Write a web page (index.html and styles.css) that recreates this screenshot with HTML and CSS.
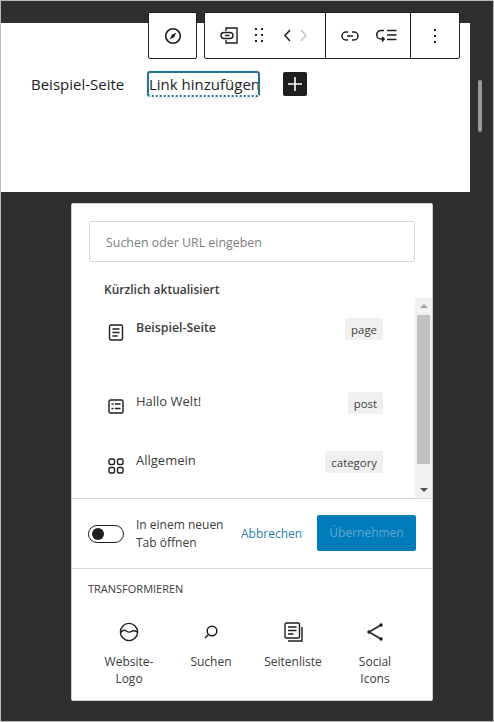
FILE: index.html
```html
<!DOCTYPE html>
<html lang="en">
<head>
    <meta charset="UTF-8">
    <meta name="viewport" content="width=device-width, initial-scale=1.0">
    <title>Navigation Link</title>
    <link rel="stylesheet" href="styles.css">
</head>
<body>
    <div class="frame">
        <div class="canvas-row">
            <div class="canvas">
                <span class="nav-item">Beispiel-Seite</span>
                <span class="nav-link">Link hinzufügen</span>
                <span class="add-btn">
                    <svg width="14" height="14" viewBox="0 0 14 14"><path d="M7 0v14M0 7h14" stroke="#fff" stroke-width="1.6" fill="none"/></svg>
                </span>
            </div>
            <div class="page-scroll"><div class="page-thumb"></div></div>

            <div class="toolbar">
                <div class="tool-group">
                    <span class="tool tool-compass">
                        <svg width="18" height="18" viewBox="0 0 18 18" fill="none" stroke="#1e1e1e" stroke-width="1.6"><circle cx="9" cy="9" r="7.3"/><path d="M12.2 5.8 10.2 10.2 5.8 12.2 7.8 7.8Z" fill="#1e1e1e" stroke="none"/></svg>
                    </span>
                </div>
                <div class="tool-group">
                    <div class="tool-section section-move">
                        <svg width="18" height="17" viewBox="0 0 18 17" fill="none" stroke="#1e1e1e" stroke-width="1.4"><path d="M6 4V1h11v15H6v-3"/><rect x="1" y="5.500" width="12" height="6" rx="3"/><path d="M5 8.500h4.500"/></svg>
                        <svg class="drag" width="9" height="15" viewBox="0 0 9 15" fill="#1e1e1e"><rect x="0" y="0" width="2" height="2"/><rect x="6" y="0" width="2" height="2"/><rect x="0" y="6" width="2" height="2"/><rect x="6" y="6" width="2" height="2"/><rect x="0" y="12" width="2" height="2"/><rect x="6" y="12" width="2" height="2"/></svg>
                        <span class="arrows">
                            <svg width="7" height="13" viewBox="0 0 7 13" fill="none" stroke="#1e1e1e" stroke-width="1.5"><path d="M6 1 1 6.500 6 12"/></svg>
                            <svg width="7" height="13" viewBox="0 0 7 13" fill="none" stroke="#c4c4c4" stroke-width="1.5"><path d="M1 1 6 6.500 1 12"/></svg>
                        </span>
                    </div>
                    <div class="tool-section section-link">
                        <svg width="18" height="10" viewBox="0 0 18 10" fill="none" stroke="#1e1e1e" stroke-width="1.5"><path d="M7 1H5a4 4 0 0 0 0 8h2M11 1h2a4 4 0 0 1 0 8h-2M6 5h6"/></svg>
                        <svg width="21" height="14" viewBox="0 0 21 14" fill="none" stroke="#1e1e1e" stroke-width="1.5"><path d="M8 1.500H5a4.200 4.200 0 0 0 0 8.600h3M6 8l2.200 2.100L6 12.500M11 1.500h9.500M11 6h9.500M11 10.500h9.500"/></svg>
                    </div>
                    <div class="tool-section section-more">
                        <svg width="4" height="14" viewBox="0 0 4 14" fill="#1e1e1e"><rect x="1" y="0" width="2" height="2"/><rect x="1" y="6" width="2" height="2"/><rect x="1" y="12" width="2" height="2"/></svg>
                    </div>
                </div>
            </div>
        </div>

        <div class="popover">
            <div class="search-wrap">
                <div class="search-input">Suchen oder URL eingeben</div>
            </div>
            <h2 class="recent-title">Kürzlich aktualisiert</h2>

            <div class="results">
                <div class="result-list">
                    <div class="result result-page">
                        <svg class="result-icon" width="15" height="17" viewBox="0 0 15 17" fill="none" stroke="#1e1e1e" stroke-width="1.4"><rect x="1" y="1" width="13" height="15" rx="1.500"/><path d="M4 5h7M4 8.500h7M4 12h5"/></svg>
                        <span class="result-title bold">Beispiel-Seite</span>
                        <span class="badge">page</span>
                    </div>
                    <div class="result result-post">
                        <svg class="result-icon" width="16" height="15" viewBox="0 0 16 15" fill="none" stroke="#1e1e1e" stroke-width="1.4"><rect x="1" y="1" width="14" height="13" rx="1.500"/><path d="M3.500 5h2M7 5h5.500M3.500 9.500h2M7 9.500h5.500"/></svg>
                        <span class="result-title">Hallo Welt!</span>
                        <span class="badge">post</span>
                    </div>
                    <div class="result result-cat">
                        <svg class="result-icon" width="16" height="16" viewBox="0 0 16 16" fill="none" stroke="#1e1e1e" stroke-width="1.4"><rect x="1" y="1" width="5.500" height="5.500" rx="1.500"/><rect x="9.500" y="1" width="5.500" height="5.500" rx="1.500"/><rect x="1" y="9.500" width="5.500" height="5.500" rx="1.500"/><rect x="9.500" y="9.500" width="5.500" height="5.500" rx="1.500"/></svg>
                        <span class="result-title">Allgemein</span>
                        <span class="badge">category</span>
                    </div>
                </div>
                <div class="scrollbar">
                    <span class="scroll-up"></span>
                    <div class="scroll-track"><div class="scroll-thumb"></div></div>
                    <span class="scroll-down"></span>
                </div>
            </div>

            <div class="actions">
                <span class="toggle"><span class="toggle-dot"></span></span>
                <span class="toggle-label">In einem neuen Tab öffnen</span>
                <span class="cancel">Abbrechen</span>
                <span class="apply">Übernehmen</span>
            </div>

            <div class="transform">
                <h3 class="transform-title">TRANSFORMIEREN</h3>
                <div class="transform-grid">
                    <div class="transform-item">
                        <svg width="20" height="20" viewBox="0 0 20 20" fill="none" stroke="#1e1e1e" stroke-width="1.4"><circle cx="10" cy="10" r="8.600"/><path d="M1.800 10.500c2-2.500 4-2.500 5.500-1.500s3.500 1.500 5 .5 3.500-1 5.800.5"/></svg>
                        <span>Website-Logo</span>
                    </div>
                    <div class="transform-item">
                        <svg width="20" height="20" viewBox="0 0 20 20" fill="none" stroke="#1e1e1e" stroke-width="1.5"><circle cx="11" cy="9" r="4.800"/><path d="M7.500 12.500 4 16"/></svg>
                        <span>Suchen</span>
                    </div>
                    <div class="transform-item">
                        <svg width="20" height="20" viewBox="0 0 20 20" fill="none" stroke="#1e1e1e" stroke-width="1.4"><rect x="2" y="1" width="14.500" height="15" rx="1.500"/><path d="M5 5h8.500M5 8.500h8.500M5 12h5.500M19 5v14H5"/></svg>
                        <span>Seitenliste</span>
                    </div>
                    <div class="transform-item">
                        <svg width="20" height="20" viewBox="0 0 20 20" fill="#1e1e1e" stroke="#1e1e1e" stroke-width="1.500"><path d="M16 3 4 10l12 7" fill="none"/><circle cx="16" cy="3" r="1.700" stroke="none"/><circle cx="4" cy="10" r="1.700" stroke="none"/><circle cx="16" cy="17" r="1.700" stroke="none"/></svg>
                        <span>Social Icons</span>
                    </div>
                </div>
            </div>
        </div>
    </div>
</body>
</html>
```

FILE: styles.css
```css
* {
    box-sizing: border-box;
}
html, body {
    margin: 0;
    padding: 0;
}
body {
    font-family: "Open Sans", "Noto Sans", sans-serif;
    color: #1e1e1e;
    background: #2f2f2f;
}
svg {
    display: block;
}
.frame {
    width: 494px;
    height: 722px;
    border: 1px solid #b9b9b9;
    background: #2f2f2f;
    overflow: hidden;
}
.canvas-row {
    position: relative;
    display: flex;
    height: 191px;
    padding-top: 22px;
}
.canvas {
    display: flex;
    align-items: flex-start;
    width: 469px;
    height: 169px;
    padding: 49px 0 0 30px;
    background: #fff;
    font-size: 15px;
    line-height: 24px;
}
.nav-item {
    width: 116px;
    white-space: nowrap;
}
.nav-link {
    width: 113px;
    height: 26px;
    margin-top: -1px;
    padding-left: 0;
    border: 2px solid #2a7291;
    border-bottom-style: dotted;
    border-radius: 3px;
    box-shadow: 0 0 2px #bfe3ef;
    line-height: 22px;
    white-space: nowrap;
    overflow: hidden;
}
.add-btn {
    display: flex;
    align-items: center;
    justify-content: center;
    width: 24px;
    height: 24px;
    margin-left: 23px;
    border-radius: 2px;
    background: #1e1e1e;
}
.page-scroll {
    margin: 58px 0 0 8px;
}
.page-thumb {
    width: 4px;
    height: 52px;
    margin-top: -1px;
    border-radius: 2px;
    background: #9a9a9a;
}
.toolbar {
    position: absolute;
    top: 11px;
    left: 147px;
    display: flex;
    gap: 7px;
}
.tool-group {
    display: flex;
    height: 47px;
    border: 1px solid #1e1e1e;
    border-radius: 2px;
    background: #fff;
}
.tool-compass {
    display: flex;
    align-items: center;
    justify-content: center;
    width: 47px;
}
.tool-section {
    display: flex;
    align-items: center;
    border-right: 1px solid #1e1e1e;
}
.tool-section:last-child {
    border-right: 0;
}
.section-move {
    width: 121px;
    padding-left: 15px;
}
.drag {
    margin-left: 17px;
}
.arrows {
    display: flex;
    gap: 9px;
    margin-left: 20px;
}
.section-link {
    width: 85px;
    padding-left: 15px;
    gap: 17px;
}
.section-more {
    width: 48px;
    justify-content: center;
}

.popover {
    width: 362px;
    height: 498px;
    margin: 11px 0 0 70px;
    border: 1px solid #ccc;
    border-radius: 2px;
    background: #fff;
    color: #3c3c3c;
}
.search-wrap {
    padding: 17px 17px 0;
}
.search-input {
    width: 326px;
    height: 41px;
    padding-left: 16px;
    border: 1px solid #d8d8d8;
    border-radius: 2px;
    font-size: 12.400px;
    line-height: 41px;
    color: #808080;
}
.recent-title {
    height: 36px;
    margin: 0;
    padding-left: 32px;
    font-size: 12px;
    font-weight: 600;
    line-height: 56px;
    color: #3c3c3c;
}
.results {
    display: flex;
    justify-content: space-between;
    height: 200px;
}
.result-list {
    width: 311px;
    padding-left: 36px;
}
.result {
    position: relative;
    display: flex;
    align-items: flex-start;
    padding-top: 20px;
    font-size: 13px;
    line-height: 18px;
}
.result-page {
    height: 74px;
    padding-top: 21px;
}
.result-post {
    height: 59px;
}
.result-cat {
    height: 59px;
}
.result-icon {
    width: 16px;
    margin-top: 7px;
    flex: none;
}
.result-page .result-icon {
    margin-top: 5px;
}
.result-title {
    margin-left: 12px;
}
.bold {
    font-size: 12.400px;
    font-weight: 600;
}
.badge {
    position: absolute;
    right: 0;
    top: 20px;
    height: 22px;
    padding: 0 6px;
    border-radius: 2px;
    background: #f0f0f0;
    font-size: 11.400px;
    line-height: 23px;
}
.scrollbar {
    display: flex;
    flex-direction: column;
    width: 17px;
    background: #f1f1f1;
}
.scroll-up, .scroll-down {
    display: block;
    flex: none;
    width: 0;
    height: 0;
    margin: 6px auto 0;
    border-left: 4px solid transparent;
    border-right: 4px solid transparent;
    border-bottom: 4px solid #a3a3a3;
}
.scroll-down {
    margin: 0 auto 6px;
    border-bottom: 0;
    border-top: 4px solid #505050;
}
.scroll-track {
    flex: 1;
    padding: 7px 2px 0 2px;
}
.scroll-thumb {
    height: 149px;
    background: #c1c1c1;
}

.actions {
    display: flex;
    align-items: center;
    height: 71px;
    padding-left: 16px;
    border-top: 1px solid #d8d8d8;
    border-bottom: 1px solid #d8d8d8;
}
.toggle {
    display: flex;
    align-items: center;
    width: 36px;
    height: 18px;
    padding-left: 3px;
    border: 1px solid #1e1e1e;
    border-radius: 9px;
    flex: none;
}
.toggle-dot {
    width: 12px;
    height: 12px;
    border-radius: 50%;
    background: #1e1e1e;
}
.toggle-label {
    width: 105px;
    margin-left: 12px;
    font-size: 12px;
    line-height: 18px;
    flex: none;
}
.cancel {
    width: 76px;
    font-size: 12px;
    color: #1f7fa8;
    flex: none;
}
.apply {
    width: 99px;
    height: 36px;
    margin-bottom: 2px;
    border-radius: 2px;
    background: #007cba;
    color: #62a9d0;
    font-size: 12px;
    line-height: 36px;
    text-align: center;
    flex: none;
}
.transform {
    padding: 12px 16px 0;
}
.transform-title {
    margin: 0;
    font-size: 11px;
    font-weight: 400;
    line-height: 16px;
    color: #3c3c3c;
}
.transform-grid {
    display: grid;
    grid-template-columns: repeat(4, 82px);
    margin-top: 25px;
}
.transform-item {
    display: flex;
    flex-direction: column;
    align-items: center;
    font-size: 12px;
    line-height: 17px;
    text-align: center;
}
.transform-item span {
    display: block;
    width: 62px;
    margin-top: 11px;
}
```
